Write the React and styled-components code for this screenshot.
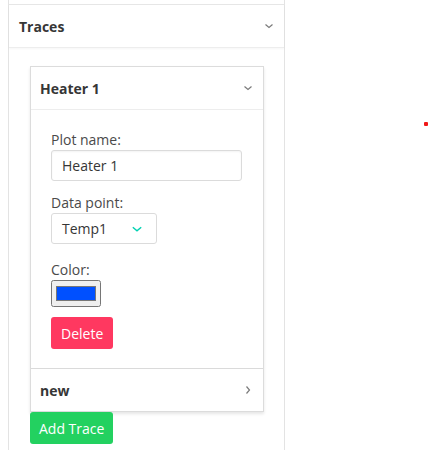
import React from 'react';
import styled, { createGlobalStyle } from 'styled-components';

const GlobalStyle = createGlobalStyle`
  html, body {
    margin: 0;
    padding: 0;
    background: #fff;
  }
  body {
    font-family: "Open Sans", "Noto Sans", sans-serif;
    font-size: 14px;
    color: #4a4a4a;
  }
`;

const Page = styled.div`
  display: flex;
  height: 450px;
  padding-left: 8px;
  overflow: hidden;
`;

const Sidebar = styled.aside`
  width: 277px;
  flex-shrink: 0;
  box-sizing: border-box;
  border-left: 1px solid #e3e3e3;
  border-right: 1px solid #e3e3e3;
  padding-top: 4px;
`;

const Canvas = styled.div`
  flex: 1;
  position: relative;
`;

const Dot = styled.div`
  position: absolute;
  display: block;
  left: ${p => p.x}px;
  top: ${p => p.y}px;
  width: 4px;
  height: 4px;
  border-radius: 1px;
  background: #f01818;
`;

const Section = styled.section`
  border-top: 1px solid #e6e6e6;
`;

const SectionHeader = styled.header`
  display: flex;
  align-items: center;
  justify-content: space-between;
  height: 42px;
  padding: 0 10px 0 10px;
  border-bottom: 1px solid #ededed;
  box-shadow: 0 1px 2px rgba(10, 10, 10, 0.04);
`;

const HeaderTitle = styled.span`
  font-weight: 700;
  font-size: 14px;
  color: #363636;
`;

const SectionBody = styled.div`
  padding: 18px 20px 0 21px;
`;

const Card = styled.div`
  border: 1px solid #dcdcdc;
  box-shadow: 0 2px 3px rgba(10, 10, 10, 0.1);
  background: #fff;
`;

const CardHeader = styled.header`
  display: flex;
  align-items: center;
  justify-content: space-between;
  height: 42px;
  padding: 0 10px 0 9px;
  border-bottom: ${p => (p.open ? '1px solid #ededed' : 'none')};
`;

const CardContent = styled.div`
  padding: 20px 20px 19px 20px;
  border-bottom: 1px solid #dadada;
`;

const Field = styled.div`
  display: flex;
  flex-direction: column;
  align-items: flex-start;
  margin-bottom: ${p => p.gap || 12}px;
`;

const Label = styled.label`
  font-size: 14px;
  line-height: 20px;
  color: #4a4a4a;
`;

const TextInput = styled.input`
  box-sizing: border-box;
  width: 191px;
  height: 31px;
  padding: 0 10px;
  border: 1px solid #dbdbdb;
  border-radius: 3px;
  font-family: inherit;
  font-size: 14px;
  color: #363636;
  box-shadow: inset 0 1px 2px rgba(10, 10, 10, 0.05);
  outline: none;
`;

const SelectBox = styled.div`
  box-sizing: border-box;
  width: 106px;
  height: 31px;
  display: flex;
  align-items: center;
  justify-content: space-between;
  padding: 0 13px 0 10px;
  border: 1px solid #dbdbdb;
  border-radius: 3px;
  color: #363636;
`;

const ColorInput = styled.input`
  width: 50px;
  height: 27px;
  margin: 0;
`;

const Button = styled.button`
  display: block;
  height: 32px;
  padding: 0 ${p => p.px}px;
  border: none;
  border-radius: 3px;
  background: ${p => p.bg};
  color: #fff;
  font-family: inherit;
  font-size: 14px;
`;

const Chevron = ({ dir = 'down', color = '#7a7a7a', size = 10 }) => (
  <svg width={size} height={size} viewBox="0 0 10 10">
    <polyline
      points={dir === 'down' ? '1.5,3.5 5,6.5 8.5,3.5' : '3.5,1.5 6.5,5 3.5,8.5'}
      fill="none"
      stroke={color}
      strokeWidth="1.2"
    />
  </svg>
);

export default function App() {
  return (
    <Page>
      <GlobalStyle />
      <Sidebar>
        <Section>
          <SectionHeader>
            <HeaderTitle>Traces</HeaderTitle>
            <Chevron />
          </SectionHeader>
          <SectionBody>
            <Card>
              <CardHeader open>
                <HeaderTitle>Heater 1</HeaderTitle>
                <Chevron />
              </CardHeader>
              <CardContent>
                <Field>
                  <Label>Plot name:</Label>
                  <TextInput defaultValue="Heater 1" />
                </Field>
                <Field gap={16}>
                  <Label>Data point:</Label>
                  <SelectBox>
                    <span>Temp1</span>
                    <Chevron color="#00d1b2" size={12} />
                  </SelectBox>
                </Field>
                <Field gap={10}>
                  <Label>Color:</Label>
                  <ColorInput type="color" defaultValue="#0050ff" />
                </Field>
                <Button bg="#ff3860" px={10}>Delete</Button>
              </CardContent>
              <CardHeader>
                <HeaderTitle>new</HeaderTitle>
                <Chevron dir="right" />
              </CardHeader>
            </Card>
            <Button bg="#23d160" px={9}>Add Trace</Button>
          </SectionBody>
        </Section>
      </Sidebar>
      <Canvas>
        <Dot x={139} y={122} />
      </Canvas>
    </Page>
  );
}
